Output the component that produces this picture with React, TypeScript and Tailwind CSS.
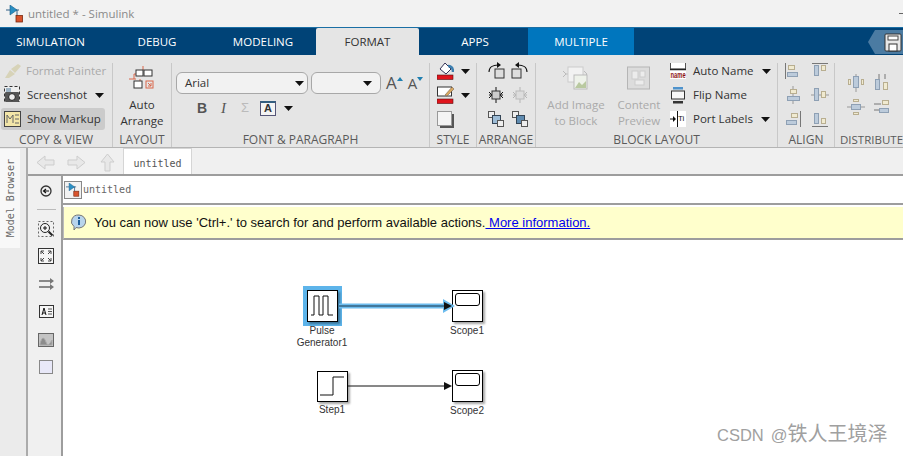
import type { ReactNode } from "react";

const ui = "font-['Open_Sans',sans-serif]";

function Caret({ className = "" }: { className?: string }) {
  return (
    <svg width="9" height="5" viewBox="0 0 9 5" className={className}>
      <path d="M0 0h9L4.5 5z" fill="#111" />
    </svg>
  );
}

function Group({ width, label, children }: { width: number; label: string; children: ReactNode }) {
  return (
    <div className="flex h-full shrink-0" style={{ width }}>
      <div className="flex min-w-0 flex-1 flex-col">
        <div className="relative h-[72px] w-full">{children}</div>
        <div className="flex h-[16px] items-center justify-center whitespace-nowrap pt-[2px] text-[12px] leading-none text-[#5a5a5a]">
          {label}
        </div>
      </div>
      <div className="mt-[4px] w-px bg-[#c8c8c8]" />
    </div>
  );
}

function RowIcon({ children, w = 24, h = 24 }: { children: ReactNode; w?: number; h?: number }) {
  return (
    <svg width={w} height={h} viewBox={`0 0 ${w} ${h}`} className="shrink-0">
      {children}
    </svg>
  );
}

function AppLogo({ size = 18 }: { size?: number }) {
  return (
    <svg width={size} height={size} viewBox="0 0 18 18">
      <path d="M0 5h4M9 5l4 0M11 5v6" stroke="#315f85" strokeWidth="1" fill="none" />
      <path d="M4 0l7 5-7 5z" fill="#2a8fc4" stroke="#1a5f8a" strokeWidth=".6" />
      <rect x="10" y="10.5" width="6.5" height="6.5" fill="#d9532c" stroke="#7a2a10" strokeWidth=".8" />
    </svg>
  );
}

function ScreenIcon() {
  return (
    <RowIcon w={18} h={18}>
      <rect x=".5" y=".5" width="15" height="15" fill="#eee" stroke="#333" strokeDasharray="3 2" />
      <rect x="1" y="6" width="14" height="10" rx="1" fill="#555" />
      <circle cx="8" cy="11" r="3.4" fill="#eee" stroke="#222" />
      <rect x="2" y="2" width="5" height="4" fill="#9db3c4" />
    </RowIcon>
  );
}

function SquareArrow({ flip = false }: { flip?: boolean }) {
  return (
    <RowIcon w={20} h={20}>
      <g transform={flip ? "translate(20,0) scale(-1,1)" : undefined}>
        <rect x="9" y="8" width="9" height="9" fill="#ddd" stroke="#333" />
        <path d="M3 11C3 6 7 4 12 4" fill="none" stroke="#111" strokeWidth="1.1" />
        <path d="M11 1l4 3-4 3z" fill="#111" />
      </g>
    </RowIcon>
  );
}

function CenterSquare({ dim = false }: { dim?: boolean }) {
  const c = dim ? "#b5b5b5" : "#111";
  return (
    <RowIcon w={20} h={20}>
      <path d="M10 2v16M3 10h14" stroke={c} />
      <path d="M3 7l3 3-3 3M17 7l-3 3 3 3" fill="none" stroke={c} />
      <rect x="6" y="6" width="8" height="8" fill={dim ? "#ddd" : "#ccc"} stroke={dim ? "#bbb" : "#333"} />
    </RowIcon>
  );
}

function Stack({ dark = false }: { dark?: boolean }) {
  return (
    <RowIcon w={18} h={18}>
      <rect x="1.500" y="1.500" width="6" height="6" fill="#eee" stroke="#555" />
      <rect x="5.500" y="5.500" width="8" height="8" fill={dark ? "#5f8bb0" : "#9dbcd6"} stroke="#345" />
      <rect x="10.500" y="10.500" width="6" height="6" fill="#eee" stroke="#555" />
    </RowIcon>
  );
}

const blue = { fill: "#bccbdb", stroke: "#8ea0b4" };
const tan = { fill: "#f0ead0", stroke: "#b8ae90" };

function AlignIcon({ kind }: { kind: number }) {
  const l = "#777";
  return (
    <RowIcon w={18} h={18}>
      {kind === 0 && (
        <>
          <path d="M1.500 1v16" stroke={l} />
          <rect x="4.500" y="3.500" width="6" height="4" {...tan} />
          <rect x="3.500" y="10.500" width="10" height="4" {...blue} />
        </>
      )}
      {kind === 1 && (
        <>
          <path d="M1 1.500h16" stroke={l} />
          <rect x="3.500" y="3.500" width="4" height="10" {...blue} />
          <rect x="10.500" y="3.500" width="4" height="5" {...tan} />
        </>
      )}
      {kind === 2 && (
        <>
          <path d="M9 0v18" stroke="#999" />
          <rect x="6.500" y="3.500" width="6" height="4" {...tan} />
          <rect x="3.500" y="10.500" width="12" height="4" {...blue} />
        </>
      )}
      {kind === 3 && (
        <>
          <path d="M0 9h18" stroke="#999" />
          <rect x="3.500" y="2.500" width="4" height="12" {...blue} />
          <rect x="10.500" y="5.500" width="4" height="6" {...tan} />
        </>
      )}
      {kind === 4 && (
        <>
          <path d="M16.500 1v16" stroke={l} />
          <rect x="7.500" y="3.500" width="6" height="4" {...tan} />
          <rect x="2.500" y="10.500" width="10" height="4" {...blue} />
        </>
      )}
      {kind === 5 && (
        <>
          <path d="M1 16.500h16" stroke={l} />
          <rect x="3.500" y="3.500" width="4" height="10" {...blue} />
          <rect x="10.500" y="8.500" width="4" height="5" {...tan} />
        </>
      )}
    </RowIcon>
  );
}

function DistIcon({ kind }: { kind: number }) {
  return (
    <RowIcon w={18} h={18}>
      {kind === 0 && (
        <>
          <path d="M9 0v18" stroke="#999" />
          <rect x="1.500" y="5.500" width="2" height="5" {...tan} />
          <rect x="6.500" y="2.500" width="5" height="11" {...blue} />
          <rect x="14.500" y="5.500" width="2" height="5" {...tan} />
        </>
      )}
      {kind === 1 && (
        <>
          <path d="M6 0v5M12 0v5" stroke="#777" />
          <rect x="2.500" y="5.500" width="4" height="10" {...blue} />
          <rect x="10.500" y="8.500" width="4" height="7" {...tan} />
        </>
      )}
      {kind === 2 && (
        <>
          <path d="M0 9h18" stroke="#999" />
          <rect x="6.500" y="1.500" width="5" height="2" {...tan} />
          <rect x="4.500" y="6.500" width="9" height="5" {...blue} />
          <rect x="6.500" y="14.500" width="5" height="2" {...tan} />
        </>
      )}
      {kind === 3 && (
        <>
          <path d="M1 6h7M1 12h5" stroke="#777" />
          <rect x="9.500" y="2.500" width="6" height="4" {...tan} />
          <rect x="6.500" y="10.500" width="9" height="4" {...blue} />
        </>
      )}
    </RowIcon>
  );
}

function Ribbon() {
  return (
    <div className={`flex h-[93px] shrink-0 items-end overflow-hidden border-b border-[#b4b4b4] bg-[#e5e5e5] ${ui}`}>
      <div className="flex h-[88px] items-stretch">
        <Group width={113} label="COPY & VIEW">
          <div className="flex flex-col pl-[1px] text-[11.500px] text-[#333]">
            <div className="flex h-[24px] items-center pl-[3px] text-[#aaa]">
              <svg width="18" height="16" viewBox="0 0 18 16" className="mr-[4px]">
                <path d="M1 15l5-8 5 4-6 4zM7 6l7-5 3 2-6 7z" fill="#d7d3b8" />
              </svg>
              Format Painter
            </div>
            <div className="flex h-[24px] items-center pl-[3px]">
              <span className="mr-[6px] w-[17px]"><ScreenIcon /></span>
              Screenshot
              <Caret className="ml-[8px]" />
            </div>
            <div className="mt-[1px] flex h-[22px] w-[104px] items-center rounded-[3px] bg-[#cbcbcb] pl-[3px]">
              <svg width="17" height="16" viewBox="0 0 17 16" className="mr-[6px]">
                <rect x=".5" y=".5" width="16" height="15" fill="#f3e6a8" stroke="#444" />
                <path d="M3 12V4l3 4 3-4v8M11 4h4M11 8h4M11 12h4" fill="none" stroke="#666" />
              </svg>
              Show Markup
            </div>
          </div>
        </Group>
        <Group width={59} label="LAYOUT">
          <div className="flex flex-col items-center pt-[7px] text-[11.500px] leading-[16px] text-[#333]">
            <svg width="26" height="24" viewBox="0 0 26 24" className="mb-[7px]">
              <path d="M0 13h7M14 0v4M8 8H5v5M11 13v3" stroke="#d9674a" fill="none" />
              <rect x="7" y="4" width="7" height="6" fill="#fff" stroke="#333" />
              <rect x="15" y="4" width="8" height="6" fill="#fff" stroke="#333" />
              <rect x="5" y="15" width="8" height="7" fill="#fff" stroke="#333" />
              <rect x="17" y="15" width="7" height="7" fill="none" stroke="#d9674a" />
              <path d="M19 17l3 3M22 17v3h-3" fill="none" stroke="#d9674a" />
            </svg>
            <span>Auto</span>
            <span>Arrange</span>
          </div>
        </Group>
        <Group width={258} label="FONT & PARAGRAPH">
          <div className="flex items-start pl-[4px] pt-[13px]">
            <div className="flex h-[22px] w-[132px] shrink-0 items-center justify-between rounded-[6px] border border-[#a8a8a8] bg-[#f2f2f2] pl-[8px] pr-[3px] text-[11.500px] text-[#333]">
              Arial
              <Caret />
            </div>
            <div className="ml-[3px] flex h-[22px] w-[70px] shrink-0 items-center justify-end rounded-[6px] border border-[#a8a8a8] bg-[#f2f2f2] pr-[8px]">
              <Caret />
            </div>
            <div className="ml-[5px] flex shrink-0 items-center text-[#555]">
              <span className="text-[17px] leading-[22px]">A</span>
              <svg width="6" height="4" viewBox="0 0 6 4" className="mb-[8px]"><path d="M0 4l3-4 3 4z" fill="#1f7fb0" /></svg>
              <span className="ml-[5px] text-[15px] leading-[22px]">A</span>
              <svg width="6" height="4" viewBox="0 0 6 4" className="mb-[8px]"><path d="M0 0h6L3 4z" fill="#1f7fb0" /></svg>
            </div>
          </div>
          <div className="mt-[4px] flex h-[20px] items-center pl-[25px] text-[#555]">
            <span className="w-[24px] font-['Liberation_Sans',sans-serif] text-[14px] font-bold">B</span>
            <span className="w-[20px] font-['Liberation_Serif',serif] text-[15px] italic">I</span>
            <span className="w-[19px] font-['Liberation_Sans',sans-serif] text-[13px] text-[#bbb]">Σ</span>
            <span className="flex h-[15px] w-[16px] items-center justify-center border border-t-2 border-[#557] border-t-[#345f80] bg-[#f4f4f4] font-['Liberation_Sans',sans-serif] text-[11px] font-bold leading-none text-[#333]">
              A
            </span>
            <Caret className="ml-[8px]" />
          </div>
        </Group>
        <Group width={47} label="STYLE">
          <div className="grid grid-cols-[24px_12px] grid-rows-[24px_24px_24px] items-center pl-[7px]">
            <svg width="17" height="18" viewBox="0 0 17 18">
              <path d="M3 7l5-6 6 6-5 5z" fill="#fff" stroke="#335" />
              <path d="M11 4c4 0 5 3 5 6" stroke="#3c7fb0" strokeWidth="2.500" fill="none" />
              <rect y="13" width="16" height="4.500" fill="#e0141c" stroke="#511" strokeWidth=".6" />
            </svg>
            <Caret />
            <svg width="17" height="18" viewBox="0 0 17 18">
              <rect x=".5" y="1" width="14" height="9" fill="#fff" stroke="#333" />
              <path d="M8 9l7-8 2 2-7 7z" fill="#d8a860" stroke="#654" strokeWidth=".5" />
              <rect y="13" width="16" height="4.500" fill="#e0141c" stroke="#511" strokeWidth=".6" />
            </svg>
            <Caret />
            <svg width="17" height="17" viewBox="0 0 17 17">
              <rect x="3" y="3" width="14" height="14" fill="#555" />
              <rect x=".5" y=".5" width="14" height="14" fill="#f4f4f4" stroke="#999" />
            </svg>
          </div>
        </Group>
        <Group width={59} label="ARRANGE">
          <div className="grid grid-cols-[24px_24px] grid-rows-[24px_24px_24px] place-items-center pl-[7px]">
            <SquareArrow />
            <SquareArrow flip />
            <CenterSquare />
            <CenterSquare dim />
            <Stack />
            <Stack dark />
          </div>
        </Group>
        <Group width={242} label="BLOCK LAYOUT">
          <div className="flex h-full text-[11.500px]">
            <div className="flex w-[80px] shrink-0 flex-col items-center pt-[7px] leading-[16px] text-[#aaa]">
              <svg width="26" height="24" viewBox="0 0 26 24" className="mb-[7px]">
                <path d="M0 5l3 3-3 3M21 5l3 3-3 3M2 8h3" fill="none" stroke="#bbb" />
                <rect x="5" y="1" width="15" height="15" fill="#f2f2f2" stroke="#ccc" />
                <rect x="11" y="9" width="13" height="14" fill="#eef2ea" stroke="#bbb" />
                <path d="M12 22l4-6 3 3 4-4v7z" fill="#b9c9a0" />
              </svg>
              <span className="whitespace-nowrap">Add Image</span>
              <span>to Block</span>
            </div>
            <div className="flex w-[46px] shrink-0 flex-col items-center pt-[7px] leading-[16px] text-[#aaa]">
              <svg width="24" height="24" viewBox="0 0 24 24" className="mb-[7px]">
                <rect x=".5" y="1" width="22" height="22" fill="#dcdcdc" stroke="#b5b5b5" />
                <rect x="5" y="5" width="6" height="8" fill="#ececec" stroke="#ccc" />
                <rect x="13" y="5" width="5" height="6" fill="#ececec" stroke="#ccc" />
                <rect x="8" y="14" width="9" height="5" fill="#ececec" stroke="#ccc" />
              </svg>
              <span>Content</span>
              <span>Preview</span>
            </div>
            <div className="flex flex-col pl-[8px] text-[#333]">
              <div className="flex h-[24px] items-center">
                <svg width="16" height="16" viewBox="0 0 16 16" className="mr-[7px]">
                  <rect width="16" height="16" fill="#fff" />
                  <path d="M.5 0v6h15V0" fill="none" stroke="#555" />
                  <path d="M0 6.500h16" stroke="#222" strokeWidth="1.500" />
                  <text transform="translate(.5 15) scale(1 1.500)" fontFamily="Liberation Sans" fontWeight="700" fontSize="5.800" fill="#8a1010">name</text>
                </svg>
                Auto Name
                <Caret className="ml-[9px]" />
              </div>
              <div className="flex h-[24px] items-center">
                <svg width="16" height="17" viewBox="0 0 16 17" className="mr-[7px]">
                  <rect x="3" y="0" width="10" height="2.500" fill="#4f93cc" />
                  <rect x="1.500" y="4" width="13" height="8" fill="#f8f8f8" stroke="#333" />
                  <rect x="3" y="14" width="10" height="2.500" fill="#333" />
                </svg>
                Flip Name
              </div>
              <div className="mt-[1px] flex h-[22px] items-center">
                <div className="mr-[7px] flex h-[16px] w-[16px] items-center bg-white font-['Liberation_Sans',sans-serif] text-[8px] leading-none text-[#222]">
                  <svg width="8" height="16" viewBox="0 0 8 16">
                    <path d="M0 8h4" stroke="#111" /><path d="M3 5l3 3-3 3z" fill="#111" /><path d="M7.500 0v16" stroke="#111" />
                  </svg>
                  Ti
                </div>
                Port Labels
                <Caret className="ml-[8px]" />
              </div>
            </div>
          </div>
        </Group>
        <Group width={57} label="ALIGN">
          <div className="grid grid-cols-[27px_27px] grid-rows-[24px_24px_24px] place-items-center pl-[1px]">
            {[0, 1, 2, 3, 4, 5].map((k) => (
              <AlignIcon key={k} kind={k} />
            ))}
          </div>
        </Group>
        <div className="flex h-full w-[68px] shrink-0 flex-col">
          <div className="grid h-[72px] grid-cols-[26px_26px] grid-rows-[24px_24px] content-start place-items-center pl-[8px] pt-[12px]">
            {[0, 1, 2, 3].map((k) => (
              <DistIcon key={k} kind={k} />
            ))}
          </div>
          <div className="flex h-[16px] items-center whitespace-nowrap pl-[5px] pt-[2px] text-[11.500px] leading-none text-[#5a5a5a]">
            DISTRIBUTE
          </div>
        </div>
      </div>
    </div>
  );
}

function NavArrow({ dir }: { dir: "left" | "right" | "up" }) {
  const rot = dir === "left" ? 0 : dir === "right" ? 180 : 90;
  return (
    <svg width="19" height="19" viewBox="0 0 19 19">
      <path
        transform={`rotate(${rot} 9.500 9.500)`}
        d="M1 9.500L9 3v4h9v5H9v4z"
        fill="#e8e8e8"
        stroke="#cdcdcd"
      />
    </svg>
  );
}

function SideTools() {
  return (
    <div className="flex w-[35px] shrink-0 flex-col items-center border-r-2 border-[#9d9d9d] bg-[#f0f0f0] pl-[3px] pt-[6px]">
      <svg width="16" height="16" viewBox="0 0 16 16" className="mt-[1px]">
        <circle cx="8" cy="8" r="5" fill="#eee" stroke="#333" strokeWidth="1.300" />
        <path d="M11 8H6M8 6L5.500 8 8 10" fill="none" stroke="#111" strokeWidth="1.100" />
      </svg>
      <div className="mt-[10px] h-px w-[19px] bg-[#bbb]" />
      <svg width="16" height="16" viewBox="0 0 16 16" className="mt-[11px]">
        <rect x=".5" y=".5" width="15" height="15" fill="none" stroke="#666" strokeDasharray="2 2" />
        <circle cx="7" cy="7" r="4.500" fill="#f4f4f4" stroke="#222" />
        <path d="M5 7h4M7 5v4" stroke="#111" />
        <path d="M10.500 10.500l4 4" stroke="#222" strokeWidth="2" />
      </svg>
      <svg width="16" height="16" viewBox="0 0 16 16" className="mt-[11px]">
        <rect x=".5" y=".5" width="15" height="15" fill="#f6f6f6" stroke="#333" />
        <path d="M3 3l3 3M3 3h3M3 3v3M13 3l-3 3M13 3h-3M13 3v3M3 13l3-3M3 13h3M3 13v-3M13 13l-3-3M13 13h-3M13 13v-3" fill="none" stroke="#444" />
      </svg>
      <svg width="15" height="12" viewBox="0 0 15 12" className="mt-[14px]">
        <path d="M0 3h12M0 9h12" stroke="#222" />
        <path d="M11 0l4 3-4 3zM11 6l4 3-4 3z" fill="#777" />
      </svg>
      <svg width="15" height="13" viewBox="0 0 15 13" className="mt-[15px]">
        <rect x=".5" y=".5" width="14" height="12" fill="#f6f6f6" stroke="#333" />
        <path d="M3 10l2-7 2 7M3.800 8h2.400" stroke="#111" fill="none" />
        <path d="M9 4h4M9 6.500h4M9 9h4" stroke="#555" />
      </svg>
      <svg width="16" height="14" viewBox="0 0 16 14" className="mt-[15px]">
        <rect x=".5" y=".5" width="15" height="13" fill="#c4c4c4" stroke="#666" />
        <path d="M2 11C4 3 6 4 8 9s3 3 6-2v5H2z" fill="#8c8c8c" stroke="#aaa" />
      </svg>
      <div className="mt-[13px] h-[14px] w-[14px] border border-[#888] bg-[#e8e8f8]" />
    </div>
  );
}

function Block({ children, className }: { children: ReactNode; className: string }) {
  return (
    <div className={`absolute border-[1.500px] border-black bg-white shadow-[2px_2px_2px_rgba(0,0,0,.35)] ${className}`}>
      {children}
    </div>
  );
}

function ScopeFace() {
  return <div className="mx-auto mt-[2px] h-[13px] w-[25px] rounded-[3px] border border-black bg-white" />;
}

function Label({ className, children }: { className: string; children: ReactNode }) {
  return (
    <div className={`absolute -translate-x-1/2 whitespace-nowrap text-center text-[10px] leading-[12px] text-[#333] ${className}`}>
      {children}
    </div>
  );
}

// the canvas starts at x=63, y=240
function Canvas() {
  return (
    <div className="relative flex-1 bg-white font-['Liberation_Sans',sans-serif]">
      <div className="absolute left-[240px] top-[46px] h-[40px] w-[39px] bg-[#5db4ea]" />
      <Block className="left-[244px] top-[50px] h-[32px] w-[31px]">
        <svg width="28" height="29" viewBox="0 0 28 29">
          <path d="M3 24h3V5h5v19h4V5h5v19h5" fill="none" stroke="#111" />
        </svg>
      </Block>
      <Block className="left-[389px] top-[50px] h-[32px] w-[31px]">
        <ScopeFace />
      </Block>
      <Block className="left-[254px] top-[131px] h-[31px] w-[31px]">
        <svg width="28" height="28" viewBox="0 0 28 28">
          <path d="M2 23h13V5h11" fill="none" stroke="#111" />
        </svg>
      </Block>
      <Block className="left-[389px] top-[130px] h-[32px] w-[31px]">
        <ScopeFace />
      </Block>
      <svg width="840" height="216" className="absolute left-0 top-0">
        <path d="M276 66h108" stroke="#6dbcee" strokeWidth="5" />
        <path d="M380 59l12 7-12 7z" fill="#6dbcee" />
        <path d="M276 66h110" stroke="#17344a" strokeWidth="1.200" />
        <path d="M381 62l8 4-8 4z" fill="#111" />
        <path d="M285 146h102" stroke="#111" strokeWidth="1" />
        <path d="M381 142l8 4-8 4z" fill="#111" />
      </svg>
      <Label className="left-[259px] top-[85px]">Pulse<br />Generator1</Label>
      <Label className="left-[404px] top-[85px]">Scope1</Label>
      <Label className="left-[269px] top-[164px]">Step1</Label>
      <Label className="left-[404px] top-[165px]">Scope2</Label>
      <div className="absolute left-[654px] top-[182px] flex items-baseline whitespace-nowrap font-['Liberation_Sans',sans-serif] text-[16.500px] leading-[22px] text-[#a0a0a0]">
        CSDN
        <span className="ml-[7px]">@</span>
        <span className="font-['Noto_Sans_CJK_SC',sans-serif] text-[20px]">铁人王境泽</span>
      </div>
    </div>
  );
}

export default function App() {
  const mono = "font-['DejaVu_Sans_Mono',monospace] text-[10px]";
  return (
    <div className="flex h-[456px] w-[903px] flex-col overflow-hidden bg-white">
      <div className={`flex h-[27px] shrink-0 items-center justify-between bg-[#f2f2f2] pl-[6px] text-[11.500px] text-[#8a8a8a] ${ui}`}>
        <div className="flex items-center gap-[4px]">
          <AppLogo />
          <span>untitled * - Simulink</span>
        </div>
        <div className="mr-[-1px] h-px w-[5px] bg-[#666]" />
      </div>

      <div className={`flex h-[28px] shrink-0 items-stretch justify-between border-t border-t-[#1a6fa5] bg-[#004377] text-[11.500px] text-white ${ui}`}>
        <div className="flex items-stretch">
          <div className="flex w-[101px] items-center justify-center">SIMULATION</div>
          <div className="flex w-[112px] items-center justify-center">DEBUG</div>
          <div className="flex w-[100px] items-center justify-center">MODELING</div>
          <div className="ml-[3px] flex w-[103px] items-center justify-center rounded-t-[2px] bg-[#e5e5e5] text-[#333]">FORMAT</div>
          <div className="flex w-[109px] items-center justify-center pl-[3px]">APPS</div>
          <div className="flex w-[106px] items-center justify-center bg-[#0076be]">MULTIPLE</div>
        </div>
        <div className="flex items-center">
          <svg width="35" height="24" viewBox="0 0 35 24">
            <path d="M0 12L7 0h28v24H7z" fill="#4b7ba2" />
            <rect x="17" y="4" width="16" height="17" rx="1" fill="#e8e8e8" stroke="#333" />
            <rect x="20" y="6" width="10" height="4" fill="#fff" stroke="#444" />
            <rect x="21" y="14" width="8" height="7" fill="#fff" stroke="#333" />
          </svg>
        </div>
      </div>

      <Ribbon />

      <div className="flex min-h-0 flex-1">
        <div className="flex w-[28px] shrink-0 border-r-2 border-[#ababab] bg-[#ebebeb]">
          <div className="mt-[1px] flex h-[99px] w-[20px] items-center justify-center bg-[#f8f8f8]">
            <span className={`rotate-180 whitespace-nowrap text-[#666] [writing-mode:vertical-rl] ${mono}`}>Model Browser</span>
          </div>
        </div>
        <div className="flex min-w-0 flex-1 flex-col">
          <div className="flex h-[28px] shrink-0 items-end border-b-2 border-[#9d9d9d] bg-[#f0f0f0] pl-[8px]">
            <div className="flex h-full w-[87px] items-center gap-[12px] pt-[2px]">
              <NavArrow dir="left" />
              <NavArrow dir="right" />
              <NavArrow dir="up" />
            </div>
            <div className={`flex h-[26px] w-[69px] items-center justify-center border border-b-0 border-[#d5d5d5] bg-white pt-[3px] text-[#555] ${mono}`}>
              untitled
            </div>
          </div>
          <div className="flex min-h-0 flex-1">
            <SideTools />
            <div className="flex min-w-0 flex-1 flex-col">
              <div className="flex h-[29px] shrink-0 items-center border-b-2 border-[#9d9d9d] pl-[1px]">
                <div className="flex h-[18px] w-[18px] items-center justify-center border border-[#888] bg-[#f2f2f2]">
                  <AppLogo size={14} />
                </div>
                <span className={`ml-[1px] text-[#666] ${mono}`}>untitled</span>
              </div>
              <div className="mt-[2px] flex h-[33px] shrink-0 items-center border-b-2 border-b-[#9d9d9d] border-l border-l-[#bbb] bg-[#ffffcc] pl-[7px] font-['Liberation_Sans',sans-serif] text-[13px] text-[#111]">
                <svg width="16" height="17" viewBox="0 0 16 17" className="mr-[7px]">
                  <path d="M8 1a7 6.500 0 1 1-3 12.500L3 16v-3.500A7 6.500 0 0 1 8 1z" fill="#b8d4ec" stroke="#777" />
                  <rect x="7" y="3" width="2" height="2" fill="#1f5f9a" />
                  <rect x="7" y="6" width="2" height="5" fill="#1f5f9a" />
                </svg>
                <span className="whitespace-nowrap">You can now use 'Ctrl+.' to search for and perform available actions.</span>
                <span className="whitespace-pre text-[#0000ee] underline"> More information.</span>
              </div>
              <Canvas />
            </div>
          </div>
        </div>
      </div>
    </div>
  );
}
